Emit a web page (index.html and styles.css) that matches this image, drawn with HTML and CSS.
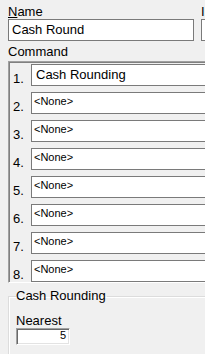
FILE: index.html
```html
<!DOCTYPE html>
<html lang="en">
<head>
    <meta charset="UTF-8">
    <title>Cash Round</title>
    <link rel="stylesheet" href="styles.css">
</head>
<body>
    <div class="window">
        <div class="top-row">
            <div class="field name-field">
                <label class="caption"><u>N</u>ame</label>
                <div class="edit">Cash Round</div>
            </div>
            <div class="field id-field">
                <label class="caption">ID</label>
                <div class="edit"></div>
            </div>
        </div>

        <label class="caption command-caption">Command</label>
        <div class="command-frame">
            <div class="cmd-row">
                <span class="cmd-num">1.</span>
                <div class="cmd-edit first">Cash Rounding</div>
            </div>
            <div class="cmd-row">
                <span class="cmd-num">2.</span>
                <div class="cmd-edit">&lt;None&gt;</div>
            </div>
            <div class="cmd-row">
                <span class="cmd-num">3.</span>
                <div class="cmd-edit">&lt;None&gt;</div>
            </div>
            <div class="cmd-row">
                <span class="cmd-num">4.</span>
                <div class="cmd-edit">&lt;None&gt;</div>
            </div>
            <div class="cmd-row">
                <span class="cmd-num">5.</span>
                <div class="cmd-edit">&lt;None&gt;</div>
            </div>
            <div class="cmd-row">
                <span class="cmd-num">6.</span>
                <div class="cmd-edit">&lt;None&gt;</div>
            </div>
            <div class="cmd-row">
                <span class="cmd-num">7.</span>
                <div class="cmd-edit">&lt;None&gt;</div>
            </div>
            <div class="cmd-row">
                <span class="cmd-num">8.</span>
                <div class="cmd-edit">&lt;None&gt;</div>
            </div>
        </div>

        <fieldset class="group">
            <legend>Cash Rounding</legend>
            <label class="caption nearest-caption">Nearest</label>
            <div class="num-edit">5</div>
        </fieldset>
    </div>
</body>
</html>
```

FILE: styles.css
```css
html, body {
    margin: 0;
    padding: 0;
    background-color: #f0f0f0;
    overflow: hidden;
}
body {
    width: 205px;
    height: 354px;
    font-family: "Liberation Sans", Arial, sans-serif;
    font-size: 13px;
    color: #000;
}
.window {
    width: 260px;
    padding: 5px 0 0 8px;
}
.caption {
    display: block;
    line-height: 14px;
}
.top-row {
    display: flex;
    gap: 7px;
}
.name-field {
    width: 186px;
}
.id-field {
    width: 60px;
}
.edit {
    box-sizing: border-box;
    height: 22px;
    padding: 0 3px;
    line-height: 20px;
    background-color: #fff;
    border: 1px solid #7a7a7a;
    white-space: nowrap;
}
.command-caption {
    margin-top: 4px;
}
.command-frame {
    box-sizing: border-box;
    height: 222px;
    margin-top: 2px;
    padding: 2px 0 0 2px;
    border-style: solid;
    border-width: 1px;
    border-color: #a0a0a0 #fff #fff #a0a0a0;
    box-shadow: inset 1px 1px #808080;
    overflow: hidden;
}
.cmd-row {
    display: flex;
    align-items: flex-end;
    margin-bottom: 6px;
}
.cmd-num {
    width: 18px;
    padding-left: 2px;
    line-height: 14px;
}
.cmd-edit {
    flex: 1;
    box-sizing: border-box;
    height: 22px;
    padding: 2px 2px 0;
    font-size: 11px;
    line-height: 13px;
    background-color: #fff;
    border: 1px solid #7a7a7a;
    white-space: nowrap;
}
.cmd-edit.first {
    padding: 0 4px;
    font-size: 13px;
    line-height: 20px;
}
.group {
    margin: 6px 0 0 0;
    padding: 0 0 10px 7px;
    border: none;
    border-top: 1px solid #dcdcdc;
    border-left: 1px solid #dcdcdc;
    box-shadow: inset 1px 1px #fff;
    min-width: 0;
}
.group legend {
    padding: 0 1px 0 0;
    line-height: 14px;
}
.nearest-caption {
    margin-top: 11px;
}
.num-edit {
    box-sizing: border-box;
    width: 54px;
    height: 17px;
    padding: 0 3px;
    font-size: 11px;
    line-height: 13px;
    text-align: right;
    background-color: #fff;
    border-style: solid;
    border-width: 1px;
    border-color: #a0a0a0 #fff #fff #a0a0a0;
    box-shadow: inset 1px 1px #696969, inset -1px -1px #e3e3e3;
}
```
